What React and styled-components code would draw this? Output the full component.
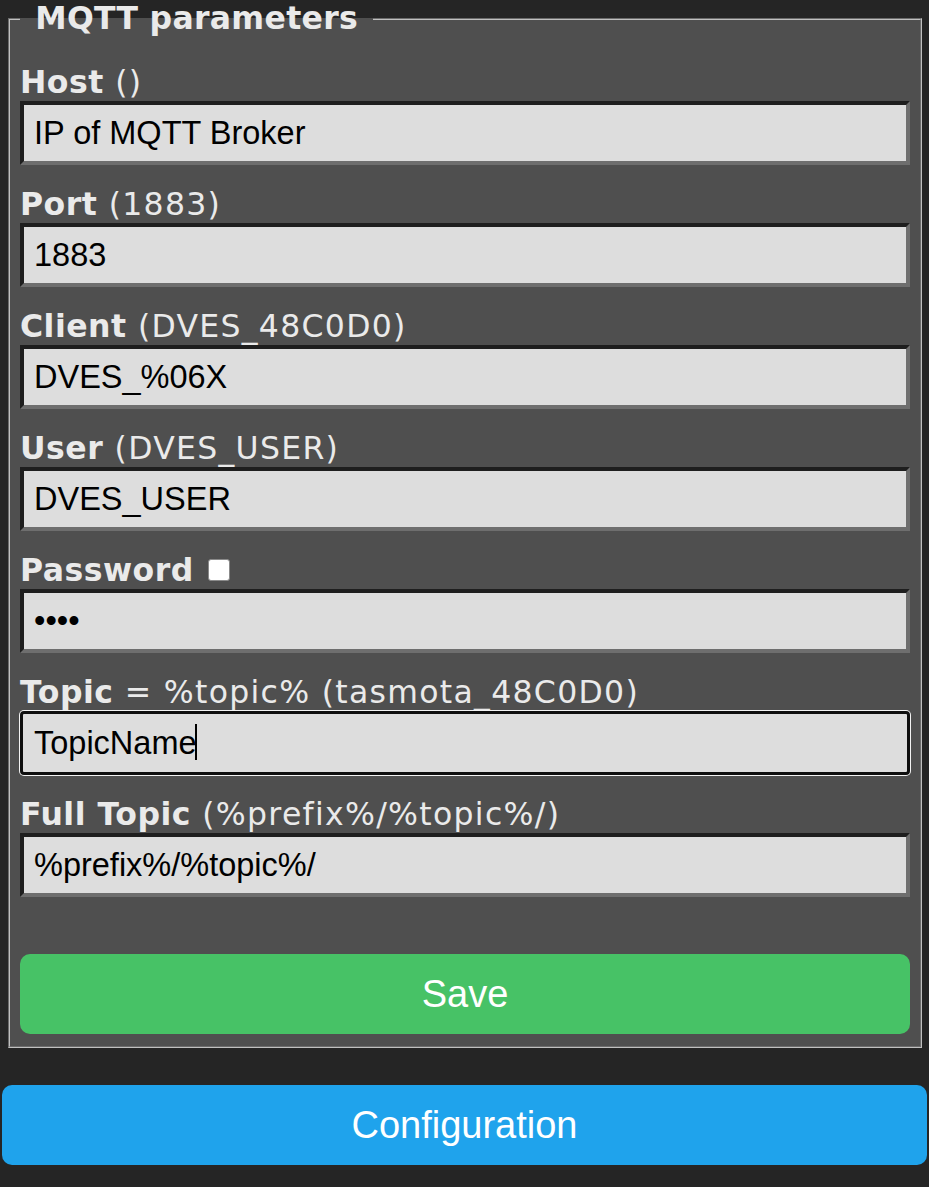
import React from "react";
import styled, { createGlobalStyle, css } from "styled-components";

const GlobalStyle = createGlobalStyle`
  html, body { margin: 0; padding: 0; }
  body {
    background: #252525;
    font-family: "DejaVu Sans", Verdana, sans-serif;
    color: #eaeaea;
  }
`;

const Page = styled.div`
  display: flex;
  flex-direction: column;
  padding: 0 2px 23px;
`;

const Fieldset = styled.fieldset`
  margin: 0 5px 0 6px;
  padding: 0 10px 12px;
  border: 2px groove #c0c0c0;
  background: #4f4f4f;
  min-width: 0;
`;

const Legend = styled.legend`
  font-family: "DejaVu Sans", Verdana, sans-serif;
  font-weight: bold;
  font-size: 31.5px;
  line-height: 37px;
  letter-spacing: 0.3px;
  color: #eaeaea;
  padding: 0 4px;
`;

const Fields = styled.div`
  display: flex;
  flex-direction: column;
  gap: 21px;
  padding-top: 27px;
`;

const Field = styled.div`
  display: flex;
  flex-direction: column;
`;

const Label = styled.div`
  font-size: 31.5px;
  line-height: 37px;
  color: #eaeaea;
  white-space: nowrap;
`;

const Name = styled.b`
  font-weight: bold;
  letter-spacing: 0.5px;
`;

const Hint = styled.span`
  letter-spacing: 1.3px;
`;

const CheckBox = styled.span`
  display: inline-block;
  width: 20px;
  height: 20px;
  margin-left: 14px;
  background: #ffffff;
  border: 1px solid #8a8a8a;
  border-radius: 3px;
  vertical-align: baseline;
`;

const InputWrap = styled.div`
  position: relative;
`;

const TextInput = styled.input`
  display: block;
  width: 100%;
  box-sizing: border-box;
  height: 64px;
  margin: 0;
  padding: 0 10px;
  font-family: "Liberation Sans", Arial, sans-serif;
  font-size: 32.5px;
  color: #000;
  background: #dddddd;
  border-style: solid;
  border-width: 4px;
  border-color: #1e1e1e #6e6e6e #6e6e6e #1e1e1e;
  outline: none;
  ${(p) =>
    p.$focused &&
    css`
      border: 3px solid #0e0e0e;
      border-radius: 4px;
      padding: 0 11px;
      box-shadow: 0 0 0 1px #f2f2f2;
    `}
`;

const Caret = styled.span`
  position: absolute;
  top: 13px;
  width: 2px;
  height: 36px;
  background: #000;
`;

const Button = styled.button`
  display: block;
  width: 100%;
  border: 0;
  border-radius: 10px;
  background: ${(p) => p.$bg};
  color: #ffffff;
  font-family: "Liberation Sans", Arial, sans-serif;
  font-size: 38px;
  line-height: 80px;
  padding: 0;
  margin-top: ${(p) => p.$mt}px;
  cursor: pointer;
`;

const fields = [
  { name: "Host", hint: " ()", value: "IP of MQTT Broker" },
  { name: "Port", hint: " (1883)", value: "1883" },
  { name: "Client", hint: " (DVES_48C0D0)", value: "DVES_%06X" },
  { name: "User", hint: " (DVES_USER)", value: "DVES_USER" },
  { name: "Password", check: true, value: "abcd", type: "password" },
  { name: "Topic", hint: " = %topic% (tasmota_48C0D0)", value: "TopicName", focused: true, caret: 175 },
  { name: "Full Topic", hint: " (%prefix%/%topic%/)", value: "%prefix%/%topic%/" },
];

export default function App() {
  return (
    <>
      <GlobalStyle />
      <Page>
        <Fieldset>
          <Legend>&nbsp;MQTT parameters&nbsp;</Legend>
          <Fields>
            {fields.map((f) => (
              <Field key={f.name}>
                <Label>
                  <Name>{f.name}</Name>
                  {f.hint && <Hint>{f.hint}</Hint>}
                  {f.check && <CheckBox />}
                </Label>
                <InputWrap>
                  <TextInput
                    type={f.type || "text"}
                    defaultValue={f.value}
                    $focused={f.focused}
                    readOnly
                  />
                  {f.caret && <Caret style={{ left: f.caret }} />}
                </InputWrap>
              </Field>
            ))}
          </Fields>
          <Button $bg="#47c266" $mt={57}>Save</Button>
        </Fieldset>
        <Button $bg="#1fa3ec" $mt={37}>Configuration</Button>
      </Page>
    </>
  );
}
